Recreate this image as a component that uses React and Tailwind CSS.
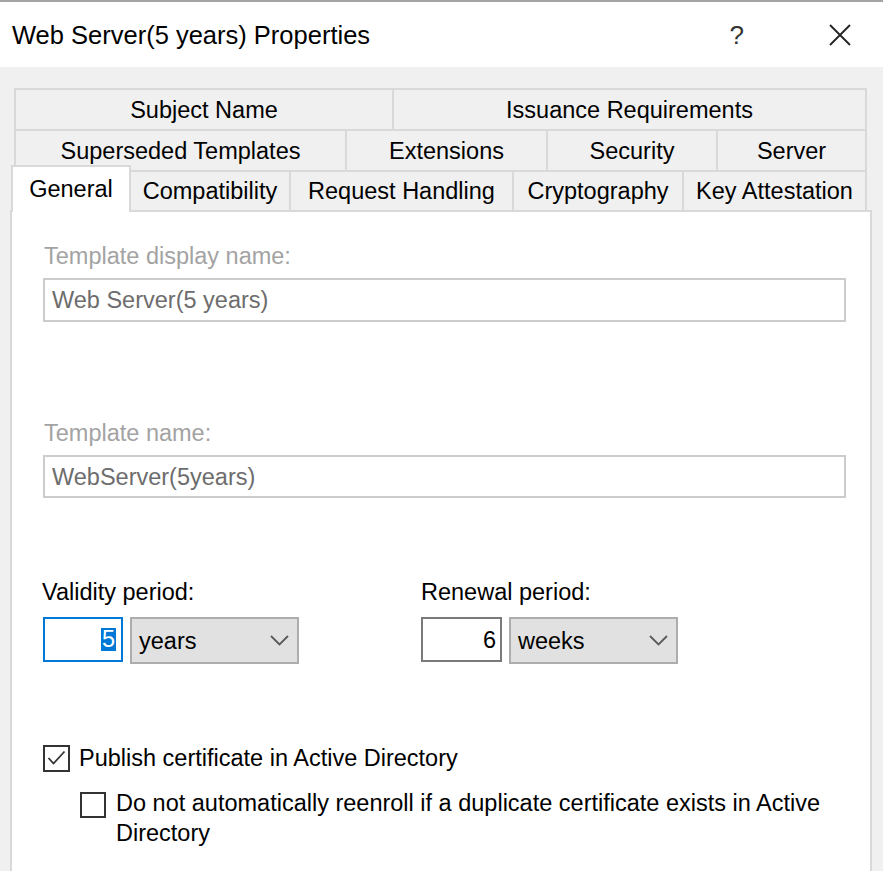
import React from "react";

const font = { fontFamily: "'Liberation Sans', Arial, sans-serif" };

function Tab({ w, last, first, children }) {
  return (
    <div className={`flex items-center justify-center bg-[#f0f0f0] border-t-2 border-[#d9d9d9] ${first ? "" : "border-l-2"} ${last ? "border-r-2" : ""} ${w}`}>
      {children}
    </div>
  );
}

function Chevron() {
  return (
    <svg width="19" height="11" viewBox="0 0 19 11" className="shrink-0">
      <polyline points="1,1 9.5,9.5 18,1" fill="none" stroke="#5a5a5a" strokeWidth="1.8" />
    </svg>
  );
}

function Select({ value }) {
  return (
    <div className="ml-[7px] flex h-[47px] w-[169px] items-center justify-between border-2 border-[#adadad] bg-[#e1e1e1] pl-[7px] pr-[8px] text-black">
      <span>{value}</span>
      <Chevron />
    </div>
  );
}

export default function App() {
  return (
    <div className="h-[871px] w-[883px] overflow-hidden bg-[#f0f0f0] text-[23.5px] leading-[30px] text-black" style={font}>
      {/* title bar */}
      <div className="flex h-[67px] items-center border-t-2 border-[#a3a3a3] bg-white pl-[12px] pr-[32px]">
        <span className="text-[25.5px] text-black">Web Server(5 years) Properties</span>
        <span className="ml-auto text-[26px] text-[#333]">?</span>
        <svg width="22" height="22" viewBox="0 0 22 22" className="ml-[85px]">
          <path d="M1 1 L21 21 M21 1 L1 21" stroke="#222" strokeWidth="1.8" />
        </svg>
      </div>

      {/* tabs */}
      <div className="pt-[21px]">
        <div className="ml-[14px] flex h-[41px]">
          <Tab w="w-[378px]">Subject Name</Tab>
          <Tab w="w-[475px]" last>Issuance Requirements</Tab>
        </div>
        <div className="ml-[14px] flex h-[41px]">
          <Tab w="w-[331px]">Superseded Templates</Tab>
          <Tab w="w-[201px]">Extensions</Tab>
          <Tab w="w-[170px]">Security</Tab>
          <Tab w="w-[151px]" last>Server</Tab>
        </div>
        <div className="ml-[11px] flex h-[40px] items-start">
          <div className="relative z-10 -mt-[5px] flex h-[47px] w-[120px] items-center justify-center border-2 border-b-0 border-[#d9d9d9] bg-white pb-[1px]">
            General
          </div>
          <Tab w="h-[40px] w-[158px]" first>Compatibility</Tab>
          <Tab w="h-[40px] w-[223px]">Request Handling</Tab>
          <Tab w="h-[40px] w-[170px]">Cryptography</Tab>
          <Tab w="h-[40px] w-[185px]" last>Key Attestation</Tab>
        </div>

        {/* panel */}
        <div className="ml-[10px] h-[700px] w-[862px] border-2 border-[#d9d9d9] bg-white pl-[31px] pt-[29px]">
          <div className="pl-[1px] text-[#a3a3a3]">Template display name:</div>
          <div className="mt-[7px] flex h-[44px] w-[803px] items-center border-2 border-[#cccccc] pl-[7px] text-[#6d6d6d]">
            Web Server(5 years)
          </div>

          <div className="mt-[96px] pl-[1px] text-[#a3a3a3]">Template name:</div>
          <div className="mt-[7px] flex h-[43px] w-[803px] items-center border-2 border-[#cccccc] pl-[7px] text-[#6d6d6d]">
            WebServer(5years)
          </div>

          <div className="mt-[79px] flex">
            <div className="w-[378px]">
              <div className="-ml-[1px]">Validity period:</div>
              <div className="mt-[10px] flex items-start">
                <div className="flex h-[45px] w-[80px] items-center justify-end border-2 border-[#0078d7] pr-[5px]">
                  <span className="bg-[#0078d7] px-[1px] leading-[23px] text-white">5</span>
                </div>
                <Select value="years" />
              </div>
            </div>
            <div>
              <div>Renewal period:</div>
              <div className="mt-[10px] flex items-start">
                <div className="flex h-[45px] w-[81px] items-center justify-end border-2 border-[#7a7a7a] pr-[4px]">
                  6
                </div>
                <Select value="weeks" />
              </div>
            </div>
          </div>

          <div className="mt-[79px] flex items-center">
            <div className="flex h-[27px] w-[27px] items-center justify-center border-2 border-[#333]">
              <svg width="19" height="16" viewBox="0 0 19 16">
                <polyline points="1.5,8 6.5,13.5 17.5,1.5" fill="none" stroke="#333" strokeWidth="1.8" />
              </svg>
            </div>
            <span className="ml-[9px]">Publish certificate in Active Directory</span>
          </div>

          <div className="mt-[15px] ml-[37px] flex items-start">
            <div className="mt-[4px] h-[26px] w-[26px] shrink-0 border-2 border-[#333]" />
            <span className="ml-[10px]">
              Do not automatically reenroll if a duplicate certificate exists in Active
              <br />
              Directory
            </span>
          </div>
        </div>
      </div>
    </div>
  );
}
